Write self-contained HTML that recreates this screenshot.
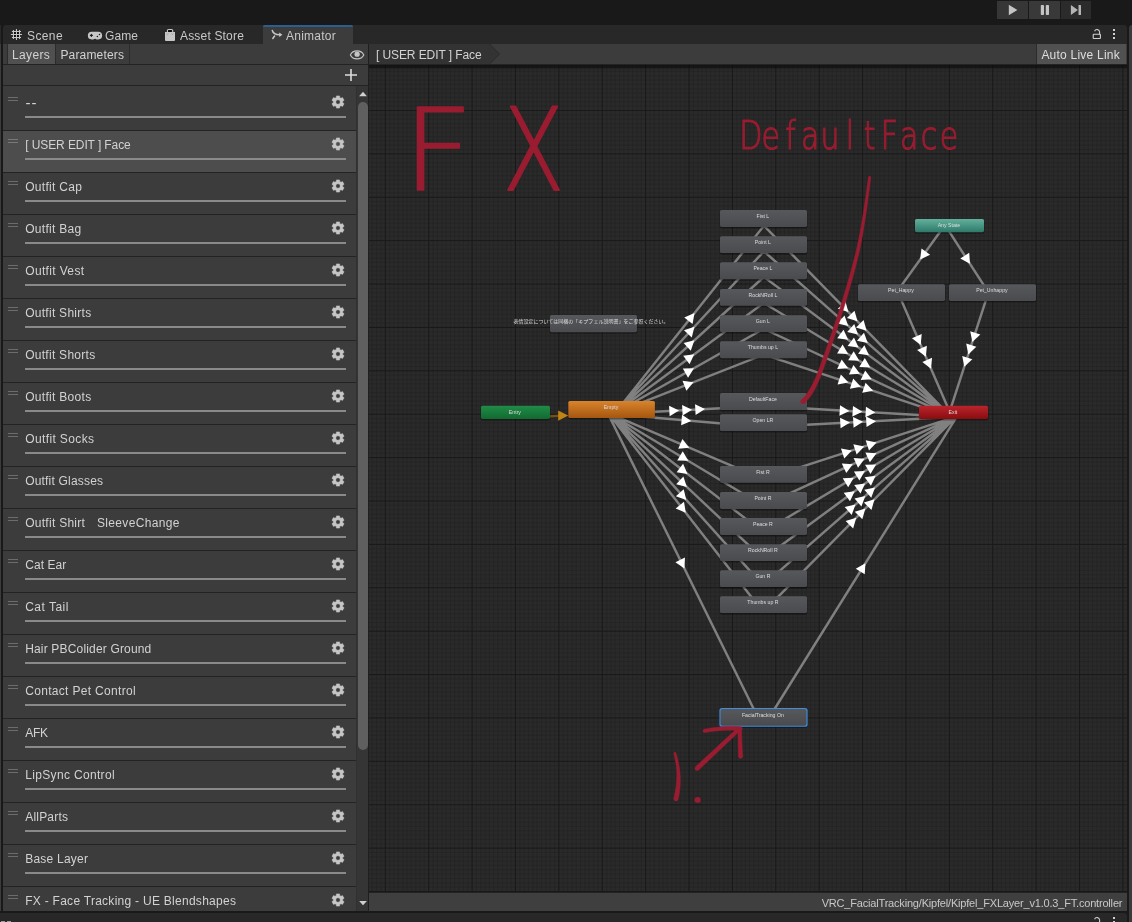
<!DOCTYPE html><html><head><meta charset="utf-8"><title>Animator</title><style>
html,body{margin:0;padding:0}
body{width:1132px;height:922px;background:#191919;position:relative;overflow:hidden;font-family:"Liberation Sans", sans-serif;font-size:12px;color:#d2d2d2}
.a{position:absolute}
.t{position:absolute;white-space:pre;line-height:normal}
.row{position:absolute;left:3px;width:353px;background:#3c3c3c}
.bar{position:absolute;left:25px;width:321px;height:2px;background:#8a8a8a}
.hl{position:absolute;left:8px;width:10px;height:1px;background:#707070}
.bd{position:absolute;left:3px;width:353px;height:1px;background:#232323}
</style></head><body><div id="root" style="position:absolute;left:0;top:0;width:1132px;height:922px;will-change:transform">
<div class="a" style="left:997px;top:1px;width:31px;height:18px;background:#363636"></div>
<div class="a" style="left:1029px;top:1px;width:31px;height:18px;background:#393939"></div>
<div class="a" style="left:1061px;top:1px;width:30px;height:18px;background:#2b2b2b"></div>
<svg class="a" style="left:997px;top:0" width="100" height="20" viewBox="997 0 100 20"><path d="M1008.8 4.7 L1017.4 10 L1008.8 15.3Z" fill="#c4c4c4"/><rect x="1040.8" y="5" width="3.2" height="10" rx="0.8" fill="#c4c4c4"/><rect x="1045.8" y="5" width="3.2" height="10" rx="0.8" fill="#c4c4c4"/><path d="M1070.9 5 L1077.9 10 L1070.9 15Z" fill="#b4b4b4"/><rect x="1078.5" y="5" width="2.5" height="10" rx="0.6" fill="#b4b4b4"/></svg>
<div class="a" style="left:0;top:25px;width:1px;height:19px;background:#282828"></div>
<div class="a" style="left:0;top:44px;width:1px;height:867px;background:#3c3c3c"></div>
<div class="a" style="left:1129px;top:25px;width:3px;height:897px;background:#3a3a3a;border-radius:3px 0 0 0"></div>
<div class="a" style="left:0;top:913px;width:1127px;height:9px;background:#282828;border-radius:0 3px 0 0"></div>
<svg class="a" style="left:1088px;top:913px" width="36" height="9" viewBox="1088 913 36 9"><path d="M1094.6 919.2a2.6 2.6 0 0 1 5.0 0.8v2.4" fill="none" stroke="#d0d0d0" stroke-width="1.1"/><rect x="1113" y="917" width="2" height="2" fill="#d0d0d0"/><rect x="1113" y="921" width="2" height="1" fill="#d0d0d0"/></svg>
<div class="a" style="left:1px;top:921px;width:4px;height:1px;background:#9a9a9a"></div><div class="a" style="left:7px;top:921px;width:4px;height:1px;background:#9a9a9a"></div>
<div class="a" style="left:3px;top:25px;width:1124px;height:19px;background:#282828;border-radius:3px 3px 0 0"></div>
<div class="a" style="left:263px;top:25px;width:90px;height:19px;background:#3c3c3c;border-radius:2px 2px 0 0;overflow:hidden"><div style="height:2px;background:#2c5f90"></div><div style="height:1px;background:#3d3a38"></div></div>
<div class="t" style="left:27.00px;top:28.64px;font-size:12px;letter-spacing:0.394px;color:#c8c8c8;">Scene</div>
<div class="t" style="left:105.00px;top:28.64px;font-size:12px;letter-spacing:0.078px;color:#c8c8c8;">Game</div>
<div class="t" style="left:180.00px;top:28.64px;font-size:12px;letter-spacing:0.179px;color:#c8c8c8;">Asset Store</div>
<div class="t" style="left:286.00px;top:28.64px;font-size:12px;letter-spacing:0.246px;color:#c8c8c8;">Animator</div>
<svg class="a" style="left:0;top:25px" width="300" height="19" viewBox="0 25 300 19"><g fill="#0c0c0c"><rect x="14" y="32" width="2" height="2"/><rect x="17" y="32" width="2" height="2"/><rect x="14" y="35" width="2" height="2"/><rect x="17" y="35" width="2" height="2"/></g><g stroke="#c6c6c6" stroke-width="1.05" fill="none"><path d="M13.45 29.9V39.1M16.45 28.9V40.1M19.5 29.9V39.1M11.9 31.5H21M10.9 34.5H22M11.9 37.5H21"/></g><path d="M91.7 31.7H98.3A3.85 3.85 0 0 1 98.3 39.4H96.6Q95 37.9 93.4 39.4H91.7A3.85 3.85 0 0 1 91.7 31.7Z" fill="#c6c6c6"/><g fill="#1c1c1c"><rect x="89.9" y="34.85" width="3" height="1.1"/><rect x="90.85" y="33.9" width="1.1" height="3"/><circle cx="99.5" cy="34.5" r="0.75"/><circle cx="97.4" cy="36.5" r="0.75"/></g><rect x="167.9" y="30.1" width="3.8" height="1.8" fill="#0a0a0a"/><path d="M165 32H175V40A1 1 0 0 1 174 41H166A1 1 0 0 1 165 40Z" fill="#c6c6c6"/><path d="M167.4 32.5V30.6A1.1 1.1 0 0 1 168.5 29.5H171.6A1.1 1.1 0 0 1 172.7 30.6V32.5" stroke="#c6c6c6" stroke-width="1.1" fill="none"/><path d="M166.4 33.6L167.4 34.6L168.4 33.6M171.5 33.6L172.5 34.6L173.5 33.6" stroke="#8c8c8c" stroke-width="0.7" fill="none"/><g stroke="#c6c6c6" stroke-width="1.5" fill="none" stroke-linecap="round"><path d="M272.3 30.5C273 33.2 275.3 34.7 279.6 34.7M272.8 38.5L274.6 36"/></g><path d="M279.2 32.4L282.4 34.7L279.2 37Z" fill="#c6c6c6"/></svg>
<svg class="a" style="left:1088px;top:25px" width="36" height="19" viewBox="1088 25 36 19"><rect x="1093.2" y="34.3" width="7.2" height="4.2" rx="0.6" fill="none" stroke="#d0d0d0" stroke-width="1.1"/><path d="M1094.6 31.2a2.6 2.6 0 0 1 5.0 0.8v2.4" fill="none" stroke="#d0d0d0" stroke-width="1.1"/><rect x="1113" y="29" width="2" height="2" fill="#d0d0d0"/><rect x="1113" y="33" width="2" height="2" fill="#d0d0d0"/><rect x="1113" y="37" width="2" height="2" fill="#d0d0d0"/></svg>
<div class="a" style="left:3px;top:44px;width:1124px;height:20px;background:#3c3c3c"></div>
<div class="a" style="left:3px;top:64px;width:1124px;height:1px;background:#232323"></div>
<div class="a" style="left:8px;top:44px;width:47px;height:20px;background:#505050"></div>
<div class="a" style="left:7px;top:44px;width:1px;height:20px;background:#2c2c2c"></div>
<div class="a" style="left:55px;top:44px;width:1px;height:20px;background:#2c2c2c"></div>
<div class="a" style="left:129px;top:44px;width:1px;height:20px;background:#2c2c2c"></div>
<div class="t" style="left:12.10px;top:47.94px;font-size:12px;letter-spacing:0.328px;color:#d2d2d2;">Layers</div>
<div class="t" style="left:60.40px;top:47.94px;font-size:12px;letter-spacing:0.167px;color:#d2d2d2;">Parameters</div>
<svg class="a" style="left:348px;top:46px" width="18" height="18" viewBox="348 46 18 18"><path d="M350.4 55 C352.8 49.6 361.2 49.6 363.8 55 C361.2 60.2 352.8 60.2 350.4 55Z" fill="none" stroke="#c4c4c4" stroke-width="1.15"/><circle cx="357.1" cy="54.2" r="2.6" fill="#c4c4c4"/></svg>
<div class="a" style="left:368px;top:44px;width:1px;height:868px;background:#1f1f1f"></div>
<svg class="a" style="left:369px;top:44px" width="140" height="20" viewBox="369 44 140 20"><path d="M369 44H489.5L499.5 54L489.5 64H369Z" fill="#333333"/><path d="M489.5 44L499.5 54L489.5 64" fill="none" stroke="#2a2a2a" stroke-width="1"/></svg>
<div class="t" style="left:375.90px;top:47.94px;font-size:12px;letter-spacing:-0.080px;color:#d2d2d2;">[ USER EDIT ] Face</div>
<div class="a" style="left:1037px;top:44px;width:89px;height:20px;background:#515151"></div>
<div class="a" style="left:1036px;top:44px;width:1px;height:20px;background:#2c2c2c"></div>
<div class="t" style="left:1041.40px;top:47.94px;font-size:12px;letter-spacing:0.229px;color:#dedede;">Auto Live Link</div>
<div class="a" style="left:3px;top:65px;width:365px;height:20px;background:#3c3c3c"></div>
<div class="a" style="left:3px;top:85px;width:365px;height:1px;background:#232323"></div>
<svg class="a" style="left:343px;top:67px" width="16" height="16" viewBox="343 67 16 16"><path d="M345 75H357M351 69V81" stroke="#dcdcdc" stroke-width="1.6" fill="none"/></svg>
<div class="a" style="left:3px;top:86px;width:353px;height:825px;background:#3c3c3c"></div>
<div class="hl" style="top:97px;background:#6c6c6c"></div><div class="hl" style="top:100px;background:#6c6c6c"></div>
<div class="bar" style="top:116px"></div>
<div class="t" style="left:25.40px;top:93.72px;font-size:15px;letter-spacing:0.000px;color:#d2d2d2;letter-spacing:1.1px;">--</div>
<svg class="a" style="left:330px;top:94px" width="16" height="16" viewBox="-8 -8 16 16"><path fill="#c6c6c6" fill-rule="evenodd" stroke="#c6c6c6" stroke-width="0.5" stroke-linejoin="round" d="M1.70 -4.43L1.58 -6.10L-1.58 -6.10L-1.70 -4.43L-2.99 -3.69L-4.49 -4.42L-6.07 -1.68L-4.69 -0.74L-4.69 0.74L-6.07 1.68L-4.49 4.42L-2.99 3.69L-1.70 4.43L-1.58 6.10L1.58 6.10L1.70 4.43L2.99 3.69L4.49 4.42L6.07 1.68L4.69 0.74L4.69 -0.74L6.07 -1.68L4.49 -4.42L2.99 -3.69ZM0 -2.25a2.25 2.25 0 1 0 0 4.5a2.25 2.25 0 1 0 0 -4.5z"/></svg>
<div class="a" style="left:3px;top:131px;width:353px;height:41px;background:#4d4d4d"></div>
<div class="bd" style="top:130px"></div>
<div class="hl" style="top:139px;background:#787878"></div><div class="hl" style="top:142px;background:#787878"></div>
<div class="bar" style="top:158px"></div>
<div class="t" style="left:25.20px;top:137.94px;font-size:12px;letter-spacing:-0.091px;color:#d2d2d2;">[ USER EDIT ] Face</div>
<svg class="a" style="left:330px;top:136px" width="16" height="16" viewBox="-8 -8 16 16"><path fill="#c6c6c6" fill-rule="evenodd" stroke="#c6c6c6" stroke-width="0.5" stroke-linejoin="round" d="M1.70 -4.43L1.58 -6.10L-1.58 -6.10L-1.70 -4.43L-2.99 -3.69L-4.49 -4.42L-6.07 -1.68L-4.69 -0.74L-4.69 0.74L-6.07 1.68L-4.49 4.42L-2.99 3.69L-1.70 4.43L-1.58 6.10L1.58 6.10L1.70 4.43L2.99 3.69L4.49 4.42L6.07 1.68L4.69 0.74L4.69 -0.74L6.07 -1.68L4.49 -4.42L2.99 -3.69ZM0 -2.25a2.25 2.25 0 1 0 0 4.5a2.25 2.25 0 1 0 0 -4.5z"/></svg>
<div class="bd" style="top:172px"></div>
<div class="hl" style="top:181px;background:#6c6c6c"></div><div class="hl" style="top:184px;background:#6c6c6c"></div>
<div class="bar" style="top:200px"></div>
<div class="t" style="left:25.20px;top:179.94px;font-size:12px;letter-spacing:0.297px;color:#d2d2d2;">Outfit Cap</div>
<svg class="a" style="left:330px;top:178px" width="16" height="16" viewBox="-8 -8 16 16"><path fill="#c6c6c6" fill-rule="evenodd" stroke="#c6c6c6" stroke-width="0.5" stroke-linejoin="round" d="M1.70 -4.43L1.58 -6.10L-1.58 -6.10L-1.70 -4.43L-2.99 -3.69L-4.49 -4.42L-6.07 -1.68L-4.69 -0.74L-4.69 0.74L-6.07 1.68L-4.49 4.42L-2.99 3.69L-1.70 4.43L-1.58 6.10L1.58 6.10L1.70 4.43L2.99 3.69L4.49 4.42L6.07 1.68L4.69 0.74L4.69 -0.74L6.07 -1.68L4.49 -4.42L2.99 -3.69ZM0 -2.25a2.25 2.25 0 1 0 0 4.5a2.25 2.25 0 1 0 0 -4.5z"/></svg>
<div class="bd" style="top:214px"></div>
<div class="hl" style="top:223px;background:#6c6c6c"></div><div class="hl" style="top:226px;background:#6c6c6c"></div>
<div class="bar" style="top:242px"></div>
<div class="t" style="left:25.20px;top:221.94px;font-size:12px;letter-spacing:0.287px;color:#d2d2d2;">Outfit Bag</div>
<svg class="a" style="left:330px;top:220px" width="16" height="16" viewBox="-8 -8 16 16"><path fill="#c6c6c6" fill-rule="evenodd" stroke="#c6c6c6" stroke-width="0.5" stroke-linejoin="round" d="M1.70 -4.43L1.58 -6.10L-1.58 -6.10L-1.70 -4.43L-2.99 -3.69L-4.49 -4.42L-6.07 -1.68L-4.69 -0.74L-4.69 0.74L-6.07 1.68L-4.49 4.42L-2.99 3.69L-1.70 4.43L-1.58 6.10L1.58 6.10L1.70 4.43L2.99 3.69L4.49 4.42L6.07 1.68L4.69 0.74L4.69 -0.74L6.07 -1.68L4.49 -4.42L2.99 -3.69ZM0 -2.25a2.25 2.25 0 1 0 0 4.5a2.25 2.25 0 1 0 0 -4.5z"/></svg>
<div class="bd" style="top:256px"></div>
<div class="hl" style="top:265px;background:#6c6c6c"></div><div class="hl" style="top:268px;background:#6c6c6c"></div>
<div class="bar" style="top:284px"></div>
<div class="t" style="left:25.20px;top:263.94px;font-size:12px;letter-spacing:0.354px;color:#d2d2d2;">Outfit Vest</div>
<svg class="a" style="left:330px;top:262px" width="16" height="16" viewBox="-8 -8 16 16"><path fill="#c6c6c6" fill-rule="evenodd" stroke="#c6c6c6" stroke-width="0.5" stroke-linejoin="round" d="M1.70 -4.43L1.58 -6.10L-1.58 -6.10L-1.70 -4.43L-2.99 -3.69L-4.49 -4.42L-6.07 -1.68L-4.69 -0.74L-4.69 0.74L-6.07 1.68L-4.49 4.42L-2.99 3.69L-1.70 4.43L-1.58 6.10L1.58 6.10L1.70 4.43L2.99 3.69L4.49 4.42L6.07 1.68L4.69 0.74L4.69 -0.74L6.07 -1.68L4.49 -4.42L2.99 -3.69ZM0 -2.25a2.25 2.25 0 1 0 0 4.5a2.25 2.25 0 1 0 0 -4.5z"/></svg>
<div class="bd" style="top:298px"></div>
<div class="hl" style="top:307px;background:#6c6c6c"></div><div class="hl" style="top:310px;background:#6c6c6c"></div>
<div class="bar" style="top:326px"></div>
<div class="t" style="left:25.20px;top:305.94px;font-size:12px;letter-spacing:0.274px;color:#d2d2d2;">Outfit Shirts</div>
<svg class="a" style="left:330px;top:304px" width="16" height="16" viewBox="-8 -8 16 16"><path fill="#c6c6c6" fill-rule="evenodd" stroke="#c6c6c6" stroke-width="0.5" stroke-linejoin="round" d="M1.70 -4.43L1.58 -6.10L-1.58 -6.10L-1.70 -4.43L-2.99 -3.69L-4.49 -4.42L-6.07 -1.68L-4.69 -0.74L-4.69 0.74L-6.07 1.68L-4.49 4.42L-2.99 3.69L-1.70 4.43L-1.58 6.10L1.58 6.10L1.70 4.43L2.99 3.69L4.49 4.42L6.07 1.68L4.69 0.74L4.69 -0.74L6.07 -1.68L4.49 -4.42L2.99 -3.69ZM0 -2.25a2.25 2.25 0 1 0 0 4.5a2.25 2.25 0 1 0 0 -4.5z"/></svg>
<div class="bd" style="top:340px"></div>
<div class="hl" style="top:349px;background:#6c6c6c"></div><div class="hl" style="top:352px;background:#6c6c6c"></div>
<div class="bar" style="top:368px"></div>
<div class="t" style="left:25.20px;top:347.94px;font-size:12px;letter-spacing:0.273px;color:#d2d2d2;">Outfit Shorts</div>
<svg class="a" style="left:330px;top:346px" width="16" height="16" viewBox="-8 -8 16 16"><path fill="#c6c6c6" fill-rule="evenodd" stroke="#c6c6c6" stroke-width="0.5" stroke-linejoin="round" d="M1.70 -4.43L1.58 -6.10L-1.58 -6.10L-1.70 -4.43L-2.99 -3.69L-4.49 -4.42L-6.07 -1.68L-4.69 -0.74L-4.69 0.74L-6.07 1.68L-4.49 4.42L-2.99 3.69L-1.70 4.43L-1.58 6.10L1.58 6.10L1.70 4.43L2.99 3.69L4.49 4.42L6.07 1.68L4.69 0.74L4.69 -0.74L6.07 -1.68L4.49 -4.42L2.99 -3.69ZM0 -2.25a2.25 2.25 0 1 0 0 4.5a2.25 2.25 0 1 0 0 -4.5z"/></svg>
<div class="bd" style="top:382px"></div>
<div class="hl" style="top:391px;background:#6c6c6c"></div><div class="hl" style="top:394px;background:#6c6c6c"></div>
<div class="bar" style="top:410px"></div>
<div class="t" style="left:25.20px;top:389.94px;font-size:12px;letter-spacing:0.296px;color:#d2d2d2;">Outfit Boots</div>
<svg class="a" style="left:330px;top:388px" width="16" height="16" viewBox="-8 -8 16 16"><path fill="#c6c6c6" fill-rule="evenodd" stroke="#c6c6c6" stroke-width="0.5" stroke-linejoin="round" d="M1.70 -4.43L1.58 -6.10L-1.58 -6.10L-1.70 -4.43L-2.99 -3.69L-4.49 -4.42L-6.07 -1.68L-4.69 -0.74L-4.69 0.74L-6.07 1.68L-4.49 4.42L-2.99 3.69L-1.70 4.43L-1.58 6.10L1.58 6.10L1.70 4.43L2.99 3.69L4.49 4.42L6.07 1.68L4.69 0.74L4.69 -0.74L6.07 -1.68L4.49 -4.42L2.99 -3.69ZM0 -2.25a2.25 2.25 0 1 0 0 4.5a2.25 2.25 0 1 0 0 -4.5z"/></svg>
<div class="bd" style="top:424px"></div>
<div class="hl" style="top:433px;background:#6c6c6c"></div><div class="hl" style="top:436px;background:#6c6c6c"></div>
<div class="bar" style="top:452px"></div>
<div class="t" style="left:25.20px;top:431.94px;font-size:12px;letter-spacing:0.380px;color:#d2d2d2;">Outfit Socks</div>
<svg class="a" style="left:330px;top:430px" width="16" height="16" viewBox="-8 -8 16 16"><path fill="#c6c6c6" fill-rule="evenodd" stroke="#c6c6c6" stroke-width="0.5" stroke-linejoin="round" d="M1.70 -4.43L1.58 -6.10L-1.58 -6.10L-1.70 -4.43L-2.99 -3.69L-4.49 -4.42L-6.07 -1.68L-4.69 -0.74L-4.69 0.74L-6.07 1.68L-4.49 4.42L-2.99 3.69L-1.70 4.43L-1.58 6.10L1.58 6.10L1.70 4.43L2.99 3.69L4.49 4.42L6.07 1.68L4.69 0.74L4.69 -0.74L6.07 -1.68L4.49 -4.42L2.99 -3.69ZM0 -2.25a2.25 2.25 0 1 0 0 4.5a2.25 2.25 0 1 0 0 -4.5z"/></svg>
<div class="bd" style="top:466px"></div>
<div class="hl" style="top:475px;background:#6c6c6c"></div><div class="hl" style="top:478px;background:#6c6c6c"></div>
<div class="bar" style="top:494px"></div>
<div class="t" style="left:25.20px;top:473.94px;font-size:12px;letter-spacing:0.189px;color:#d2d2d2;">Outfit Glasses</div>
<svg class="a" style="left:330px;top:472px" width="16" height="16" viewBox="-8 -8 16 16"><path fill="#c6c6c6" fill-rule="evenodd" stroke="#c6c6c6" stroke-width="0.5" stroke-linejoin="round" d="M1.70 -4.43L1.58 -6.10L-1.58 -6.10L-1.70 -4.43L-2.99 -3.69L-4.49 -4.42L-6.07 -1.68L-4.69 -0.74L-4.69 0.74L-6.07 1.68L-4.49 4.42L-2.99 3.69L-1.70 4.43L-1.58 6.10L1.58 6.10L1.70 4.43L2.99 3.69L4.49 4.42L6.07 1.68L4.69 0.74L4.69 -0.74L6.07 -1.68L4.49 -4.42L2.99 -3.69ZM0 -2.25a2.25 2.25 0 1 0 0 4.5a2.25 2.25 0 1 0 0 -4.5z"/></svg>
<div class="bd" style="top:508px"></div>
<div class="hl" style="top:517px;background:#6c6c6c"></div><div class="hl" style="top:520px;background:#6c6c6c"></div>
<div class="bar" style="top:536px"></div>
<div class="t" style="left:25.20px;top:515.94px;font-size:12px;letter-spacing:0.276px;color:#d2d2d2;">Outfit Shirt</div>
<div class="t" style="left:97.00px;top:515.94px;font-size:12px;letter-spacing:0.335px;color:#d2d2d2;">SleeveChange</div>
<svg class="a" style="left:330px;top:514px" width="16" height="16" viewBox="-8 -8 16 16"><path fill="#c6c6c6" fill-rule="evenodd" stroke="#c6c6c6" stroke-width="0.5" stroke-linejoin="round" d="M1.70 -4.43L1.58 -6.10L-1.58 -6.10L-1.70 -4.43L-2.99 -3.69L-4.49 -4.42L-6.07 -1.68L-4.69 -0.74L-4.69 0.74L-6.07 1.68L-4.49 4.42L-2.99 3.69L-1.70 4.43L-1.58 6.10L1.58 6.10L1.70 4.43L2.99 3.69L4.49 4.42L6.07 1.68L4.69 0.74L4.69 -0.74L6.07 -1.68L4.49 -4.42L2.99 -3.69ZM0 -2.25a2.25 2.25 0 1 0 0 4.5a2.25 2.25 0 1 0 0 -4.5z"/></svg>
<div class="bd" style="top:550px"></div>
<div class="hl" style="top:559px;background:#6c6c6c"></div><div class="hl" style="top:562px;background:#6c6c6c"></div>
<div class="bar" style="top:578px"></div>
<div class="t" style="left:25.20px;top:557.94px;font-size:12px;letter-spacing:0.080px;color:#d2d2d2;">Cat Ear</div>
<svg class="a" style="left:330px;top:556px" width="16" height="16" viewBox="-8 -8 16 16"><path fill="#c6c6c6" fill-rule="evenodd" stroke="#c6c6c6" stroke-width="0.5" stroke-linejoin="round" d="M1.70 -4.43L1.58 -6.10L-1.58 -6.10L-1.70 -4.43L-2.99 -3.69L-4.49 -4.42L-6.07 -1.68L-4.69 -0.74L-4.69 0.74L-6.07 1.68L-4.49 4.42L-2.99 3.69L-1.70 4.43L-1.58 6.10L1.58 6.10L1.70 4.43L2.99 3.69L4.49 4.42L6.07 1.68L4.69 0.74L4.69 -0.74L6.07 -1.68L4.49 -4.42L2.99 -3.69ZM0 -2.25a2.25 2.25 0 1 0 0 4.5a2.25 2.25 0 1 0 0 -4.5z"/></svg>
<div class="bd" style="top:592px"></div>
<div class="hl" style="top:601px;background:#6c6c6c"></div><div class="hl" style="top:604px;background:#6c6c6c"></div>
<div class="bar" style="top:620px"></div>
<div class="t" style="left:25.20px;top:599.94px;font-size:12px;letter-spacing:0.494px;color:#d2d2d2;">Cat Tail</div>
<svg class="a" style="left:330px;top:598px" width="16" height="16" viewBox="-8 -8 16 16"><path fill="#c6c6c6" fill-rule="evenodd" stroke="#c6c6c6" stroke-width="0.5" stroke-linejoin="round" d="M1.70 -4.43L1.58 -6.10L-1.58 -6.10L-1.70 -4.43L-2.99 -3.69L-4.49 -4.42L-6.07 -1.68L-4.69 -0.74L-4.69 0.74L-6.07 1.68L-4.49 4.42L-2.99 3.69L-1.70 4.43L-1.58 6.10L1.58 6.10L1.70 4.43L2.99 3.69L4.49 4.42L6.07 1.68L4.69 0.74L4.69 -0.74L6.07 -1.68L4.49 -4.42L2.99 -3.69ZM0 -2.25a2.25 2.25 0 1 0 0 4.5a2.25 2.25 0 1 0 0 -4.5z"/></svg>
<div class="bd" style="top:634px"></div>
<div class="hl" style="top:643px;background:#6c6c6c"></div><div class="hl" style="top:646px;background:#6c6c6c"></div>
<div class="bar" style="top:662px"></div>
<div class="t" style="left:25.20px;top:641.94px;font-size:12px;letter-spacing:0.168px;color:#d2d2d2;">Hair PBColider Ground</div>
<svg class="a" style="left:330px;top:640px" width="16" height="16" viewBox="-8 -8 16 16"><path fill="#c6c6c6" fill-rule="evenodd" stroke="#c6c6c6" stroke-width="0.5" stroke-linejoin="round" d="M1.70 -4.43L1.58 -6.10L-1.58 -6.10L-1.70 -4.43L-2.99 -3.69L-4.49 -4.42L-6.07 -1.68L-4.69 -0.74L-4.69 0.74L-6.07 1.68L-4.49 4.42L-2.99 3.69L-1.70 4.43L-1.58 6.10L1.58 6.10L1.70 4.43L2.99 3.69L4.49 4.42L6.07 1.68L4.69 0.74L4.69 -0.74L6.07 -1.68L4.49 -4.42L2.99 -3.69ZM0 -2.25a2.25 2.25 0 1 0 0 4.5a2.25 2.25 0 1 0 0 -4.5z"/></svg>
<div class="bd" style="top:676px"></div>
<div class="hl" style="top:685px;background:#6c6c6c"></div><div class="hl" style="top:688px;background:#6c6c6c"></div>
<div class="bar" style="top:704px"></div>
<div class="t" style="left:25.20px;top:683.94px;font-size:12px;letter-spacing:0.317px;color:#d2d2d2;">Contact Pet Control</div>
<svg class="a" style="left:330px;top:682px" width="16" height="16" viewBox="-8 -8 16 16"><path fill="#c6c6c6" fill-rule="evenodd" stroke="#c6c6c6" stroke-width="0.5" stroke-linejoin="round" d="M1.70 -4.43L1.58 -6.10L-1.58 -6.10L-1.70 -4.43L-2.99 -3.69L-4.49 -4.42L-6.07 -1.68L-4.69 -0.74L-4.69 0.74L-6.07 1.68L-4.49 4.42L-2.99 3.69L-1.70 4.43L-1.58 6.10L1.58 6.10L1.70 4.43L2.99 3.69L4.49 4.42L6.07 1.68L4.69 0.74L4.69 -0.74L6.07 -1.68L4.49 -4.42L2.99 -3.69ZM0 -2.25a2.25 2.25 0 1 0 0 4.5a2.25 2.25 0 1 0 0 -4.5z"/></svg>
<div class="bd" style="top:718px"></div>
<div class="hl" style="top:727px;background:#6c6c6c"></div><div class="hl" style="top:730px;background:#6c6c6c"></div>
<div class="bar" style="top:746px"></div>
<div class="t" style="left:25.20px;top:725.94px;font-size:12px;letter-spacing:-0.281px;color:#d2d2d2;">AFK</div>
<svg class="a" style="left:330px;top:724px" width="16" height="16" viewBox="-8 -8 16 16"><path fill="#c6c6c6" fill-rule="evenodd" stroke="#c6c6c6" stroke-width="0.5" stroke-linejoin="round" d="M1.70 -4.43L1.58 -6.10L-1.58 -6.10L-1.70 -4.43L-2.99 -3.69L-4.49 -4.42L-6.07 -1.68L-4.69 -0.74L-4.69 0.74L-6.07 1.68L-4.49 4.42L-2.99 3.69L-1.70 4.43L-1.58 6.10L1.58 6.10L1.70 4.43L2.99 3.69L4.49 4.42L6.07 1.68L4.69 0.74L4.69 -0.74L6.07 -1.68L4.49 -4.42L2.99 -3.69ZM0 -2.25a2.25 2.25 0 1 0 0 4.5a2.25 2.25 0 1 0 0 -4.5z"/></svg>
<div class="bd" style="top:760px"></div>
<div class="hl" style="top:769px;background:#6c6c6c"></div><div class="hl" style="top:772px;background:#6c6c6c"></div>
<div class="bar" style="top:788px"></div>
<div class="t" style="left:25.20px;top:767.94px;font-size:12px;letter-spacing:0.335px;color:#d2d2d2;">LipSync Control</div>
<svg class="a" style="left:330px;top:766px" width="16" height="16" viewBox="-8 -8 16 16"><path fill="#c6c6c6" fill-rule="evenodd" stroke="#c6c6c6" stroke-width="0.5" stroke-linejoin="round" d="M1.70 -4.43L1.58 -6.10L-1.58 -6.10L-1.70 -4.43L-2.99 -3.69L-4.49 -4.42L-6.07 -1.68L-4.69 -0.74L-4.69 0.74L-6.07 1.68L-4.49 4.42L-2.99 3.69L-1.70 4.43L-1.58 6.10L1.58 6.10L1.70 4.43L2.99 3.69L4.49 4.42L6.07 1.68L4.69 0.74L4.69 -0.74L6.07 -1.68L4.49 -4.42L2.99 -3.69ZM0 -2.25a2.25 2.25 0 1 0 0 4.5a2.25 2.25 0 1 0 0 -4.5z"/></svg>
<div class="bd" style="top:802px"></div>
<div class="hl" style="top:811px;background:#6c6c6c"></div><div class="hl" style="top:814px;background:#6c6c6c"></div>
<div class="bar" style="top:830px"></div>
<div class="t" style="left:25.20px;top:809.94px;font-size:12px;letter-spacing:0.207px;color:#d2d2d2;">AllParts</div>
<svg class="a" style="left:330px;top:808px" width="16" height="16" viewBox="-8 -8 16 16"><path fill="#c6c6c6" fill-rule="evenodd" stroke="#c6c6c6" stroke-width="0.5" stroke-linejoin="round" d="M1.70 -4.43L1.58 -6.10L-1.58 -6.10L-1.70 -4.43L-2.99 -3.69L-4.49 -4.42L-6.07 -1.68L-4.69 -0.74L-4.69 0.74L-6.07 1.68L-4.49 4.42L-2.99 3.69L-1.70 4.43L-1.58 6.10L1.58 6.10L1.70 4.43L2.99 3.69L4.49 4.42L6.07 1.68L4.69 0.74L4.69 -0.74L6.07 -1.68L4.49 -4.42L2.99 -3.69ZM0 -2.25a2.25 2.25 0 1 0 0 4.5a2.25 2.25 0 1 0 0 -4.5z"/></svg>
<div class="bd" style="top:844px"></div>
<div class="hl" style="top:853px;background:#6c6c6c"></div><div class="hl" style="top:856px;background:#6c6c6c"></div>
<div class="bar" style="top:872px"></div>
<div class="t" style="left:25.20px;top:851.94px;font-size:12px;letter-spacing:0.230px;color:#d2d2d2;">Base Layer</div>
<svg class="a" style="left:330px;top:850px" width="16" height="16" viewBox="-8 -8 16 16"><path fill="#c6c6c6" fill-rule="evenodd" stroke="#c6c6c6" stroke-width="0.5" stroke-linejoin="round" d="M1.70 -4.43L1.58 -6.10L-1.58 -6.10L-1.70 -4.43L-2.99 -3.69L-4.49 -4.42L-6.07 -1.68L-4.69 -0.74L-4.69 0.74L-6.07 1.68L-4.49 4.42L-2.99 3.69L-1.70 4.43L-1.58 6.10L1.58 6.10L1.70 4.43L2.99 3.69L4.49 4.42L6.07 1.68L4.69 0.74L4.69 -0.74L6.07 -1.68L4.49 -4.42L2.99 -3.69ZM0 -2.25a2.25 2.25 0 1 0 0 4.5a2.25 2.25 0 1 0 0 -4.5z"/></svg>
<div class="bd" style="top:886px"></div>
<div class="hl" style="top:895px;background:#6c6c6c"></div><div class="hl" style="top:898px;background:#6c6c6c"></div>
<div class="t" style="left:25.20px;top:893.94px;font-size:12px;letter-spacing:0.274px;color:#d2d2d2;">FX - Face Tracking - UE Blendshapes</div>
<svg class="a" style="left:330px;top:892px" width="16" height="16" viewBox="-8 -8 16 16"><path fill="#c6c6c6" fill-rule="evenodd" stroke="#c6c6c6" stroke-width="0.5" stroke-linejoin="round" d="M1.70 -4.43L1.58 -6.10L-1.58 -6.10L-1.70 -4.43L-2.99 -3.69L-4.49 -4.42L-6.07 -1.68L-4.69 -0.74L-4.69 0.74L-6.07 1.68L-4.49 4.42L-2.99 3.69L-1.70 4.43L-1.58 6.10L1.58 6.10L1.70 4.43L2.99 3.69L4.49 4.42L6.07 1.68L4.69 0.74L4.69 -0.74L6.07 -1.68L4.49 -4.42L2.99 -3.69ZM0 -2.25a2.25 2.25 0 1 0 0 4.5a2.25 2.25 0 1 0 0 -4.5z"/></svg>
<div class="a" style="left:356px;top:86px;width:12px;height:825px;background:#353535"></div>
<div class="a" style="left:356px;top:86px;width:1px;height:825px;background:#303030"></div>
<div class="a" style="left:358px;top:102px;width:10px;height:648px;background:#5f5f5f;border-radius:5px"></div>
<svg class="a" style="left:357px;top:88px" width="11" height="12" viewBox="357 88 11 12"><path d="M359.1 96.2L363 91.7L366.9 96.2Z" fill="#d0d0d0"/></svg>
<svg class="a" style="left:357px;top:898px" width="11" height="10" viewBox="357 898 11 10"><path d="M359.2 900.9L366.9 900.9L363 905.3Z" fill="#d0d0d0"/></svg>
<svg class="a" style="left:369px;top:65px" width="758" height="827" viewBox="369 65 758 827"><defs><linearGradient id="gn" x1="0" y1="0" x2="0" y2="1"><stop offset="0" stop-color="#56585c"/><stop offset="1" stop-color="#494b4f"/></linearGradient><linearGradient id="go" x1="0" y1="0" x2="0" y2="1"><stop offset="0" stop-color="#d9832c"/><stop offset="1" stop-color="#a5570f"/></linearGradient><linearGradient id="gg" x1="0" y1="0" x2="0" y2="1"><stop offset="0" stop-color="#208c47"/><stop offset="1" stop-color="#126a31"/></linearGradient><linearGradient id="gr" x1="0" y1="0" x2="0" y2="1"><stop offset="0" stop-color="#bb252d"/><stop offset="1" stop-color="#8a0c0f"/></linearGradient><linearGradient id="gt" x1="0" y1="0" x2="0" y2="1"><stop offset="0" stop-color="#62b09c"/><stop offset="1" stop-color="#2e7a6a"/></linearGradient><linearGradient id="gs" x1="0" y1="0" x2="0" y2="1"><stop offset="0" stop-color="#000" stop-opacity="0.55"/><stop offset="1" stop-color="#000" stop-opacity="0"/></linearGradient></defs><rect x="369" y="65" width="758" height="827" fill="#2a2a2a"/><path d="M372.28 65V892M376.62 65V892M380.96 65V892M389.64 65V892M393.98 65V892M398.32 65V892M402.66 65V892M407.00 65V892M411.33 65V892M415.67 65V892M420.01 65V892M424.35 65V892M433.03 65V892M437.37 65V892M441.71 65V892M446.05 65V892M450.38 65V892M454.72 65V892M459.06 65V892M463.40 65V892M467.74 65V892M476.42 65V892M480.76 65V892M485.10 65V892M489.44 65V892M493.77 65V892M498.11 65V892M502.45 65V892M506.79 65V892M511.13 65V892M519.81 65V892M524.15 65V892M528.49 65V892M532.83 65V892M537.16 65V892M541.50 65V892M545.84 65V892M550.18 65V892M554.52 65V892M563.20 65V892M567.54 65V892M571.88 65V892M576.22 65V892M580.56 65V892M584.89 65V892M589.23 65V892M593.57 65V892M597.91 65V892M606.59 65V892M610.93 65V892M615.27 65V892M619.61 65V892M623.94 65V892M628.28 65V892M632.62 65V892M636.96 65V892M641.30 65V892M649.98 65V892M654.32 65V892M658.66 65V892M663.00 65V892M667.34 65V892M671.67 65V892M676.01 65V892M680.35 65V892M684.69 65V892M693.37 65V892M697.71 65V892M702.05 65V892M706.39 65V892M710.73 65V892M715.06 65V892M719.40 65V892M723.74 65V892M728.08 65V892M736.76 65V892M741.10 65V892M745.44 65V892M749.78 65V892M754.12 65V892M758.45 65V892M762.79 65V892M767.13 65V892M771.47 65V892M780.15 65V892M784.49 65V892M788.83 65V892M793.17 65V892M797.51 65V892M801.84 65V892M806.18 65V892M810.52 65V892M814.86 65V892M823.54 65V892M827.88 65V892M832.22 65V892M836.56 65V892M840.89 65V892M845.23 65V892M849.57 65V892M853.91 65V892M858.25 65V892M866.93 65V892M871.27 65V892M875.61 65V892M879.95 65V892M884.29 65V892M888.62 65V892M892.96 65V892M897.30 65V892M901.64 65V892M910.32 65V892M914.66 65V892M919.00 65V892M923.34 65V892M927.67 65V892M932.01 65V892M936.35 65V892M940.69 65V892M945.03 65V892M953.71 65V892M958.05 65V892M962.39 65V892M966.73 65V892M971.07 65V892M975.40 65V892M979.74 65V892M984.08 65V892M988.42 65V892M997.10 65V892M1001.44 65V892M1005.78 65V892M1010.12 65V892M1014.45 65V892M1018.79 65V892M1023.13 65V892M1027.47 65V892M1031.81 65V892M1040.49 65V892M1044.83 65V892M1049.17 65V892M1053.51 65V892M1057.85 65V892M1062.18 65V892M1066.52 65V892M1070.86 65V892M1075.20 65V892M1083.88 65V892M1088.22 65V892M1092.56 65V892M1096.90 65V892M1101.24 65V892M1105.57 65V892M1109.91 65V892M1114.25 65V892M1118.59 65V892M369 71.45H1127M369 75.79H1127M369 80.13H1127M369 84.47H1127M369 88.81H1127M369 93.14H1127M369 97.48H1127M369 101.82H1127M369 106.16H1127M369 114.84H1127M369 119.18H1127M369 123.52H1127M369 127.86H1127M369 132.19H1127M369 136.53H1127M369 140.87H1127M369 145.21H1127M369 149.55H1127M369 158.23H1127M369 162.57H1127M369 166.91H1127M369 171.25H1127M369 175.59H1127M369 179.92H1127M369 184.26H1127M369 188.60H1127M369 192.94H1127M369 201.62H1127M369 205.96H1127M369 210.30H1127M369 214.64H1127M369 218.97H1127M369 223.31H1127M369 227.65H1127M369 231.99H1127M369 236.33H1127M369 245.01H1127M369 249.35H1127M369 253.69H1127M369 258.03H1127M369 262.37H1127M369 266.70H1127M369 271.04H1127M369 275.38H1127M369 279.72H1127M369 288.40H1127M369 292.74H1127M369 297.08H1127M369 301.42H1127M369 305.75H1127M369 310.09H1127M369 314.43H1127M369 318.77H1127M369 323.11H1127M369 331.79H1127M369 336.13H1127M369 340.47H1127M369 344.81H1127M369 349.14H1127M369 353.48H1127M369 357.82H1127M369 362.16H1127M369 366.50H1127M369 375.18H1127M369 379.52H1127M369 383.86H1127M369 388.20H1127M369 392.53H1127M369 396.87H1127M369 401.21H1127M369 405.55H1127M369 409.89H1127M369 418.57H1127M369 422.91H1127M369 427.25H1127M369 431.59H1127M369 435.93H1127M369 440.26H1127M369 444.60H1127M369 448.94H1127M369 453.28H1127M369 461.96H1127M369 466.30H1127M369 470.64H1127M369 474.98H1127M369 479.31H1127M369 483.65H1127M369 487.99H1127M369 492.33H1127M369 496.67H1127M369 505.35H1127M369 509.69H1127M369 514.03H1127M369 518.37H1127M369 522.71H1127M369 527.04H1127M369 531.38H1127M369 535.72H1127M369 540.06H1127M369 548.74H1127M369 553.08H1127M369 557.42H1127M369 561.76H1127M369 566.10H1127M369 570.43H1127M369 574.77H1127M369 579.11H1127M369 583.45H1127M369 592.13H1127M369 596.47H1127M369 600.81H1127M369 605.15H1127M369 609.49H1127M369 613.82H1127M369 618.16H1127M369 622.50H1127M369 626.84H1127M369 635.52H1127M369 639.86H1127M369 644.20H1127M369 648.54H1127M369 652.88H1127M369 657.21H1127M369 661.55H1127M369 665.89H1127M369 670.23H1127M369 678.91H1127M369 683.25H1127M369 687.59H1127M369 691.93H1127M369 696.26H1127M369 700.60H1127M369 704.94H1127M369 709.28H1127M369 713.62H1127M369 722.30H1127M369 726.64H1127M369 730.98H1127M369 735.32H1127M369 739.65H1127M369 743.99H1127M369 748.33H1127M369 752.67H1127M369 757.01H1127M369 765.69H1127M369 770.03H1127M369 774.37H1127M369 778.71H1127M369 783.04H1127M369 787.38H1127M369 791.72H1127M369 796.06H1127M369 800.40H1127M369 809.08H1127M369 813.42H1127M369 817.76H1127M369 822.10H1127M369 826.44H1127M369 830.77H1127M369 835.11H1127M369 839.45H1127M369 843.79H1127M369 852.47H1127M369 856.81H1127M369 861.15H1127M369 865.49H1127M369 869.83H1127M369 874.16H1127M369 878.50H1127M369 882.84H1127M369 887.18H1127" stroke="#232323" stroke-width="1" fill="none" opacity="0.65"/><path d="M385.30 65V892M428.69 65V892M472.08 65V892M515.47 65V892M558.86 65V892M602.25 65V892M645.64 65V892M689.03 65V892M732.42 65V892M775.81 65V892M819.20 65V892M862.59 65V892M905.98 65V892M949.37 65V892M992.76 65V892M1036.15 65V892M1079.54 65V892M1122.93 65V892M369 67.11H1127M369 110.50H1127M369 153.89H1127M369 197.28H1127M369 240.67H1127M369 284.06H1127M369 327.45H1127M369 370.84H1127M369 414.23H1127M369 457.62H1127M369 501.01H1127M369 544.40H1127M369 587.79H1127M369 631.18H1127M369 674.57H1127M369 717.96H1127M369 761.35H1127M369 804.74H1127M369 848.13H1127M369 891.52H1127" stroke="#191919" stroke-width="1" fill="none"/><rect x="369" y="65" width="758" height="5" fill="url(#gs)"/><path d="M615.91 411.90L767.81 220.86M759.57 221.28L949.57 415.41M615.64 412.21L767.54 247.36M759.86 247.76L949.86 415.69M615.31 412.54L767.21 273.80M760.21 274.14L950.21 415.97M614.87 412.90L766.77 300.76M760.65 301.04L950.65 416.27M614.31 413.27L766.21 327.42M761.17 327.62L951.17 416.55M613.61 413.60L765.51 353.85M761.77 353.96L951.77 416.79M611.89 413.97L763.79 406.03M763.18 406.03L953.18 417.05M611.13 413.96L763.03 427.07M763.79 427.08L953.79 417.06M609.44 413.54L761.34 478.45M765.20 478.62L955.20 416.79M608.77 413.20L760.67 504.21M765.81 504.48L955.81 416.56M608.24 412.84L760.14 529.85M766.33 530.21L956.33 416.28M607.83 412.48L759.73 555.60M766.76 556.02L956.76 415.99M607.51 412.15L759.41 581.37M767.12 581.83L957.12 415.70M607.26 411.86L759.16 607.07M767.41 607.56L957.41 415.43M606.67 410.91L758.57 718.78M768.17 719.25L958.17 414.47M946.58 222.71L898.58 289.49M946.22 226.92L989.22 293.70M898.20 293.02L950.20 413.00M989.08 290.48L950.08 410.45" stroke="#808080" stroke-width="2.45" fill="none"/><path d="M548 416.4L562 415.6" stroke="#76500f" stroke-width="2.4" fill="none"/><path d="M568.2 415.6L558.2 410.6L558.2 420.8Z" fill="#c08414"/><path d="M694.47 313.09L692.58 323.98L684.28 317.39Z" fill="#ffffff"/><path d="M848.41 312.06L837.84 308.83L845.42 301.42Z" fill="#ffffff"/><path d="M857.51 321.35L846.93 318.12L854.51 310.71Z" fill="#ffffff"/><path d="M866.60 330.64L856.03 327.41L863.60 320.00Z" fill="#ffffff"/><path d="M694.44 326.70L691.77 337.42L683.97 330.24Z" fill="#ffffff"/><path d="M848.26 325.89L837.49 323.44L844.51 315.50Z" fill="#ffffff"/><path d="M858.00 334.50L847.23 332.05L854.25 324.11Z" fill="#ffffff"/><path d="M867.75 343.11L856.97 340.66L863.99 332.72Z" fill="#ffffff"/><path d="M694.36 340.34L690.77 350.79L683.62 342.96Z" fill="#ffffff"/><path d="M848.16 339.79L837.21 338.24L843.56 329.74Z" fill="#ffffff"/><path d="M858.58 347.57L847.63 346.01L853.97 337.52Z" fill="#ffffff"/><path d="M868.99 355.35L858.05 353.79L864.39 345.30Z" fill="#ffffff"/><path d="M694.20 354.34L689.54 364.36L683.24 355.84Z" fill="#ffffff"/><path d="M848.12 354.09L837.08 353.59L842.58 344.53Z" fill="#ffffff"/><path d="M859.24 360.83L848.20 360.33L853.69 351.27Z" fill="#ffffff"/><path d="M870.35 367.57L859.31 367.07L864.81 358.01Z" fill="#ffffff"/><path d="M693.91 368.28L688.08 377.67L682.86 368.44Z" fill="#ffffff"/><path d="M848.20 368.35L837.17 369.04L841.66 359.44Z" fill="#ffffff"/><path d="M859.97 373.86L848.94 374.55L853.43 364.95Z" fill="#ffffff"/><path d="M871.75 379.37L860.71 380.06L865.21 370.46Z" fill="#ffffff"/><path d="M693.47 382.19L686.38 390.67L682.50 380.81Z" fill="#ffffff"/><path d="M848.42 382.61L837.54 384.60L840.87 374.53Z" fill="#ffffff"/><path d="M860.76 386.69L849.89 388.68L853.22 378.61Z" fill="#ffffff"/><path d="M873.10 390.77L862.23 392.76L865.56 382.69Z" fill="#ffffff"/><path d="M679.05 410.46L669.64 416.26L669.09 405.67Z" fill="#ffffff"/><path d="M692.03 409.78L682.62 415.58L682.07 404.99Z" fill="#ffffff"/><path d="M705.01 409.10L695.60 414.90L695.05 404.32Z" fill="#ffffff"/><path d="M849.40 411.03L839.41 415.76L840.02 405.18Z" fill="#ffffff"/><path d="M862.37 411.78L852.38 416.51L853.00 405.93Z" fill="#ffffff"/><path d="M875.35 412.54L865.36 417.27L865.98 406.68Z" fill="#ffffff"/><path d="M691.26 420.88L681.14 425.32L682.05 414.76Z" fill="#ffffff"/><path d="M850.00 422.53L840.59 428.34L840.04 417.75Z" fill="#ffffff"/><path d="M862.98 421.85L853.58 427.65L853.02 417.07Z" fill="#ffffff"/><path d="M875.97 421.16L866.56 426.97L866.00 416.38Z" fill="#ffffff"/><path d="M689.25 447.64L678.25 448.71L682.41 438.96Z" fill="#ffffff"/><path d="M851.83 450.43L844.25 458.47L840.97 448.39Z" fill="#ffffff"/><path d="M864.20 446.41L856.61 454.45L853.33 444.37Z" fill="#ffffff"/><path d="M876.56 442.39L868.97 450.43L865.69 440.35Z" fill="#ffffff"/><path d="M688.33 460.86L677.28 460.42L682.73 451.33Z" fill="#ffffff"/><path d="M852.82 464.22L846.25 473.10L841.79 463.48Z" fill="#ffffff"/><path d="M864.62 458.76L858.04 467.64L853.59 458.02Z" fill="#ffffff"/><path d="M876.42 453.30L869.84 462.18L865.39 452.56Z" fill="#ffffff"/><path d="M687.52 473.91L676.60 472.19L683.07 463.79Z" fill="#ffffff"/><path d="M853.78 477.77L848.19 487.30L842.74 478.21Z" fill="#ffffff"/><path d="M864.93 471.09L859.34 480.62L853.89 471.53Z" fill="#ffffff"/><path d="M876.08 464.40L870.49 473.93L865.04 464.84Z" fill="#ffffff"/><path d="M686.84 486.92L676.14 484.13L683.41 476.41Z" fill="#ffffff"/><path d="M854.68 491.23L850.01 501.25L843.73 492.71Z" fill="#ffffff"/><path d="M865.14 483.51L860.48 493.54L854.19 485.00Z" fill="#ffffff"/><path d="M875.61 475.80L870.94 485.82L864.66 477.29Z" fill="#ffffff"/><path d="M686.26 499.89L675.84 496.21L683.73 489.13Z" fill="#ffffff"/><path d="M855.50 504.56L851.68 514.94L844.70 506.96Z" fill="#ffffff"/><path d="M865.28 496.00L861.47 506.38L854.49 498.40Z" fill="#ffffff"/><path d="M875.07 487.45L871.26 497.82L864.28 489.84Z" fill="#ffffff"/><path d="M685.79 512.78L675.65 508.38L684.01 501.87Z" fill="#ffffff"/><path d="M856.22 517.75L853.17 528.38L845.63 520.92Z" fill="#ffffff"/><path d="M865.36 508.51L862.31 519.13L854.77 511.68Z" fill="#ffffff"/><path d="M874.51 499.27L871.45 509.89L863.92 502.44Z" fill="#ffffff"/><path d="M684.48 568.61L675.43 562.26L684.94 557.57Z" fill="#ffffff"/><path d="M865.39 563.30L864.76 574.33L855.76 568.73Z" fill="#ffffff"/><path d="M920.13 259.51L921.48 248.54L930.09 254.73Z" fill="#ffffff"/><path d="M969.99 263.84L960.29 258.56L969.20 252.82Z" fill="#ffffff"/><path d="M920.70 344.94L911.98 338.14L921.70 333.93Z" fill="#ffffff"/><path d="M925.87 356.86L917.15 350.07L926.87 345.86Z" fill="#ffffff"/><path d="M931.04 368.79L922.32 362.00L932.04 357.78Z" fill="#ffffff"/><path d="M972.30 342.10L970.26 331.23L980.34 334.51Z" fill="#ffffff"/><path d="M968.28 354.46L966.24 343.60L976.32 346.87Z" fill="#ffffff"/><path d="M964.26 366.82L962.22 355.96L972.30 359.24Z" fill="#ffffff"/><rect x="719.70" y="210.80" width="87.60" height="17.70" rx="2" fill="#000" opacity="0.35"/><rect x="720.00" y="210.00" width="87.00" height="16.90" rx="1.6" fill="url(#gn)"/><rect x="719.70" y="237.00" width="87.60" height="17.70" rx="2" fill="#000" opacity="0.35"/><rect x="720.00" y="236.20" width="87.00" height="16.90" rx="1.6" fill="url(#gn)"/><rect x="719.70" y="263.10" width="87.60" height="17.70" rx="2" fill="#000" opacity="0.35"/><rect x="720.00" y="262.30" width="87.00" height="16.90" rx="1.6" fill="url(#gn)"/><rect x="719.70" y="289.70" width="87.60" height="17.70" rx="2" fill="#000" opacity="0.35"/><rect x="720.00" y="288.90" width="87.00" height="16.90" rx="1.6" fill="url(#gn)"/><rect x="719.70" y="316.00" width="87.60" height="17.70" rx="2" fill="#000" opacity="0.35"/><rect x="720.00" y="315.20" width="87.00" height="16.90" rx="1.6" fill="url(#gn)"/><rect x="719.70" y="342.10" width="87.60" height="17.70" rx="2" fill="#000" opacity="0.35"/><rect x="720.00" y="341.30" width="87.00" height="16.90" rx="1.6" fill="url(#gn)"/><rect x="719.70" y="393.90" width="87.60" height="17.70" rx="2" fill="#000" opacity="0.35"/><rect x="720.00" y="393.10" width="87.00" height="16.90" rx="1.6" fill="url(#gn)"/><rect x="719.70" y="415.00" width="87.60" height="17.60" rx="2" fill="#000" opacity="0.35"/><rect x="720.00" y="414.20" width="87.00" height="16.80" rx="1.6" fill="url(#gn)"/><rect x="719.70" y="466.80" width="87.60" height="17.60" rx="2" fill="#000" opacity="0.35"/><rect x="720.00" y="466.00" width="87.00" height="16.80" rx="1.6" fill="url(#gn)"/><rect x="719.70" y="492.90" width="87.60" height="17.60" rx="2" fill="#000" opacity="0.35"/><rect x="720.00" y="492.10" width="87.00" height="16.80" rx="1.6" fill="url(#gn)"/><rect x="719.70" y="518.90" width="87.60" height="17.60" rx="2" fill="#000" opacity="0.35"/><rect x="720.00" y="518.10" width="87.00" height="16.80" rx="1.6" fill="url(#gn)"/><rect x="719.70" y="545.00" width="87.60" height="17.60" rx="2" fill="#000" opacity="0.35"/><rect x="720.00" y="544.20" width="87.00" height="16.80" rx="1.6" fill="url(#gn)"/><rect x="719.70" y="571.10" width="87.60" height="17.60" rx="2" fill="#000" opacity="0.35"/><rect x="720.00" y="570.30" width="87.00" height="16.80" rx="1.6" fill="url(#gn)"/><rect x="719.70" y="597.10" width="87.60" height="17.60" rx="2" fill="#000" opacity="0.35"/><rect x="720.00" y="596.30" width="87.00" height="16.80" rx="1.6" fill="url(#gn)"/><rect x="719.70" y="709.40" width="87.60" height="18.40" rx="2" fill="#000" opacity="0.35"/><rect x="719.40" y="708.00" width="88.20" height="18.80" rx="2.6" fill="#3f8ee0"/><rect x="720.50" y="709.10" width="86.00" height="16.60" rx="1.8" fill="url(#gn)"/><rect x="568.00" y="401.80" width="87.20" height="17.80" rx="2" fill="#000" opacity="0.35"/><rect x="568.30" y="401.00" width="86.60" height="17.00" rx="1.6" fill="url(#go)"/><rect x="480.70" y="406.60" width="69.60" height="13.90" rx="2" fill="#000" opacity="0.35"/><rect x="481.00" y="405.80" width="69.00" height="13.10" rx="1.6" fill="url(#gg)"/><rect x="918.70" y="406.60" width="69.60" height="13.90" rx="2" fill="#000" opacity="0.35"/><rect x="919.00" y="405.80" width="69.00" height="13.10" rx="1.6" fill="url(#gr)"/><rect x="914.70" y="219.80" width="69.60" height="14.00" rx="2" fill="#000" opacity="0.35"/><rect x="915.00" y="219.00" width="69.00" height="13.20" rx="1.6" fill="url(#gt)"/><rect x="857.70" y="285.00" width="87.60" height="17.60" rx="2" fill="#000" opacity="0.35"/><rect x="858.00" y="284.20" width="87.00" height="16.80" rx="1.6" fill="url(#gn)"/><rect x="948.70" y="285.00" width="87.60" height="17.60" rx="2" fill="#000" opacity="0.35"/><rect x="949.00" y="284.20" width="87.00" height="16.80" rx="1.6" fill="url(#gn)"/><rect x="549.70" y="315.80" width="87.60" height="18.00" rx="2" fill="#000" opacity="0.35"/><rect x="550.00" y="315.00" width="87.00" height="17.20" rx="1.6" fill="url(#gn)"/><text transform="translate(762.90 218.10) scale(0.5)" text-anchor="middle" font-family="&quot;Liberation Sans&quot;, sans-serif" font-size="10.4" fill="#dedede">Fist L</text><text transform="translate(762.90 244.30) scale(0.5)" text-anchor="middle" font-family="&quot;Liberation Sans&quot;, sans-serif" font-size="10.4" fill="#dedede">Point L</text><text transform="translate(762.90 270.40) scale(0.5)" text-anchor="middle" font-family="&quot;Liberation Sans&quot;, sans-serif" font-size="10.4" fill="#dedede">Peace L</text><text transform="translate(762.90 297.00) scale(0.5)" text-anchor="middle" font-family="&quot;Liberation Sans&quot;, sans-serif" font-size="10.4" fill="#dedede">RockNRoll L</text><text transform="translate(762.90 323.30) scale(0.5)" text-anchor="middle" font-family="&quot;Liberation Sans&quot;, sans-serif" font-size="10.4" fill="#dedede">Gun L</text><text transform="translate(762.90 349.40) scale(0.5)" text-anchor="middle" font-family="&quot;Liberation Sans&quot;, sans-serif" font-size="10.4" fill="#dedede">Thumbs up L</text><text transform="translate(762.90 401.20) scale(0.5)" text-anchor="middle" font-family="&quot;Liberation Sans&quot;, sans-serif" font-size="10.4" fill="#dedede">DefaultFace</text><text transform="translate(762.90 422.30) scale(0.5)" text-anchor="middle" font-family="&quot;Liberation Sans&quot;, sans-serif" font-size="10.4" fill="#dedede">Open LR</text><text transform="translate(762.90 474.10) scale(0.5)" text-anchor="middle" font-family="&quot;Liberation Sans&quot;, sans-serif" font-size="10.4" fill="#dedede">Fist R</text><text transform="translate(762.90 500.20) scale(0.5)" text-anchor="middle" font-family="&quot;Liberation Sans&quot;, sans-serif" font-size="10.4" fill="#dedede">Point R</text><text transform="translate(762.90 526.20) scale(0.5)" text-anchor="middle" font-family="&quot;Liberation Sans&quot;, sans-serif" font-size="10.4" fill="#dedede">Peace R</text><text transform="translate(762.90 552.30) scale(0.5)" text-anchor="middle" font-family="&quot;Liberation Sans&quot;, sans-serif" font-size="10.4" fill="#dedede">RockNRoll R</text><text transform="translate(762.90 578.40) scale(0.5)" text-anchor="middle" font-family="&quot;Liberation Sans&quot;, sans-serif" font-size="10.4" fill="#dedede">Gun R</text><text transform="translate(762.90 604.40) scale(0.5)" text-anchor="middle" font-family="&quot;Liberation Sans&quot;, sans-serif" font-size="10.4" fill="#dedede">Thumbs up R</text><text transform="translate(762.90 716.70) scale(0.5)" text-anchor="middle" font-family="&quot;Liberation Sans&quot;, sans-serif" font-size="10.4" fill="#dedede">FacialTracking On</text><text transform="translate(611.00 409.10) scale(0.5)" text-anchor="middle" font-family="&quot;Liberation Sans&quot;, sans-serif" font-size="10.4" fill="#dedede">Empty</text><text transform="translate(514.90 413.90) scale(0.5)" text-anchor="middle" font-family="&quot;Liberation Sans&quot;, sans-serif" font-size="10.4" fill="#dedede">Entry</text><text transform="translate(952.90 413.90) scale(0.5)" text-anchor="middle" font-family="&quot;Liberation Sans&quot;, sans-serif" font-size="10.4" fill="#dedede">Exit</text><text transform="translate(948.90 227.10) scale(0.5)" text-anchor="middle" font-family="&quot;Liberation Sans&quot;, sans-serif" font-size="10.4" fill="#dedede">Any State</text><text transform="translate(900.90 292.30) scale(0.5)" text-anchor="middle" font-family="&quot;Liberation Sans&quot;, sans-serif" font-size="10.4" fill="#dedede">Pet_Happy</text><text transform="translate(991.90 292.30) scale(0.5)" text-anchor="middle" font-family="&quot;Liberation Sans&quot;, sans-serif" font-size="10.4" fill="#dedede">Pet_Unhappy</text><text transform="translate(591.00 323.40) scale(0.5)" text-anchor="middle" font-family="&quot;Liberation Sans&quot;, &quot;Noto Sans CJK JP&quot;, sans-serif" font-size="10.05" fill="#dedede">表情設定については同梱の「キプフェル説明書」をご参照ください。</text><text transform="translate(402.4 189.6) scale(1.085 1)" font-family="&quot;DejaVu Sans&quot;, sans-serif" font-weight="200" font-size="113.5" fill="#9a1c30" stroke="#9a1c30" stroke-width="1.5" stroke-linejoin="round">F</text><text transform="translate(502.7 189.6) scale(0.79 1)" font-family="&quot;DejaVu Sans&quot;, sans-serif" font-weight="200" font-size="113.5" fill="#9a1c30" stroke="#9a1c30" stroke-width="1.9" stroke-linejoin="round">X</text><text transform="translate(0 148.6) scale(1 1.325)" x="750.9 770.7 790.5 810.3 830.1 849.9 869.7 889.5 909.3 929.1 948.9" y="0" text-anchor="middle" font-family="&quot;DejaVu Sans&quot;, sans-serif" font-weight="200" font-size="30" fill="#9a1c30" stroke="#9a1c30" stroke-width="0.9">DefaultFace</text><path d="M868.5 177.4L867.5 184.3L866.6 191.3L865.6 198.3L864.5 205.3L863.5 212.3L862.4 219.3L861.2 226.2L860.0 232.9L858.7 239.6L857.4 246.0L856.0 252.2L854.5 258.2L852.1 267.1L849.6 276.2L846.9 285.5L844.1 294.9L841.2 304.4L838.1 314.0L834.9 323.8L831.6 333.6L828.2 343.5L824.7 353.4L821.2 363.3L817.5 373.3L816.0 377.0L814.4 380.4L813.0 383.5L811.5 386.3L810.1 388.8L808.8 391.0L807.5 393.0L806.2 394.8L804.9 396.4L803.6 397.8L802.4 399.2L801.0 400.4L804.0 403.6L805.4 402.2L806.8 400.8L808.2 399.1L809.6 397.4L811.0 395.4L812.4 393.3L813.9 390.9L815.3 388.2L816.7 385.3L818.2 382.1L819.7 378.6L821.3 374.7L824.8 364.7L828.4 354.7L831.8 344.7L835.1 334.8L838.4 324.9L841.5 315.1L844.5 305.4L847.4 295.9L850.1 286.4L852.8 277.1L855.2 268.0L857.5 259.0L859.0 252.9L860.3 246.6L861.6 240.1L862.8 233.4L863.9 226.6L865.0 219.7L866.1 212.7L867.1 205.7L868.0 198.6L869.0 191.6L869.9 184.6L870.7 177.6Z" fill="#9a1c30" stroke="#9a1c30" stroke-width="0.6" stroke-linejoin="round"/><circle cx="869.6" cy="177.5" r="1.4" fill="#9a1c30"/><circle cx="802.8" cy="401.7" r="2.4" fill="#9a1c30"/><path d="M673.8 753.5L674.6 756.8L675.3 760.0L675.9 763.2L676.3 766.4L676.6 769.7L676.8 772.9L676.8 776.1L676.7 779.3L676.5 782.5L676.2 785.7L675.7 788.9L675.2 792.1L674.5 795.3L673.7 798.5L678.1 799.5L678.8 796.2L679.4 792.8L679.8 789.4L680.1 786.1L680.3 782.7L680.3 779.4L680.2 776.0L680.0 772.7L679.6 769.4L679.1 766.0L678.5 762.7L677.8 759.5L676.9 756.2L676.0 752.9Z" fill="#9a1c30" stroke="#9a1c30" stroke-width="0.5" stroke-linejoin="round"/><circle cx="674.9" cy="753.2" r="1.10" fill="#9a1c30"/><circle cx="675.9" cy="799.0" r="2.30" fill="#9a1c30"/><ellipse cx="697.6" cy="799.9" rx="3.1" ry="2.9" fill="#9a1c30"/><path d="M698.5 770.1L705.5 763.6L712.4 757.1L719.2 750.6L726.0 744.1L732.8 737.7L739.5 731.2L736.9 728.4L730.1 734.8L723.2 741.1L716.4 747.5L709.4 753.9L702.5 760.3L695.5 766.7Z" fill="#9a1c30" stroke="#9a1c30" stroke-width="0.5" stroke-linejoin="round"/><circle cx="697.0" cy="768.4" r="2.25" fill="#9a1c30"/><circle cx="738.2" cy="729.8" r="1.95" fill="#9a1c30"/><path d="M704.7 732.6L709.1 731.8L713.5 731.2L717.9 730.7L722.4 730.4L726.8 730.2L731.4 730.2L735.9 730.3L740.5 730.6L740.7 726.8L736.0 726.6L731.4 726.5L726.7 726.6L722.1 726.8L717.6 727.2L713.0 727.7L708.5 728.4L704.1 729.2Z" fill="#9a1c30" stroke="#9a1c30" stroke-width="0.5" stroke-linejoin="round"/><circle cx="704.4" cy="730.9" r="1.70" fill="#9a1c30"/><circle cx="740.6" cy="728.7" r="1.90" fill="#9a1c30"/><path d="M738.1 729.5L738.0 734.3L738.1 739.0L738.1 743.6L738.2 748.1L738.3 752.4L738.5 756.7L742.7 756.5L742.5 752.3L742.2 747.9L742.0 743.5L741.8 738.9L741.7 734.3L741.5 729.5Z" fill="#9a1c30" stroke="#9a1c30" stroke-width="0.5" stroke-linejoin="round"/><circle cx="739.8" cy="729.5" r="1.75" fill="#9a1c30"/><circle cx="740.6" cy="756.6" r="2.15" fill="#9a1c30"/></svg>
<div class="a" style="left:369px;top:893px;width:758px;height:18px;background:#3f3f3f"></div>
<div class="a" style="left:369px;top:892px;width:758px;height:1px;background:#232323"></div>
<div class="t" style="left:821.70px;top:897.34px;font-size:11px;letter-spacing:-0.187px;color:#c8c8c8;">VRC_FacialTracking/Kipfel/Kipfel_FXLayer_v1.0.3_FT.controller</div>
</div></body></html>
